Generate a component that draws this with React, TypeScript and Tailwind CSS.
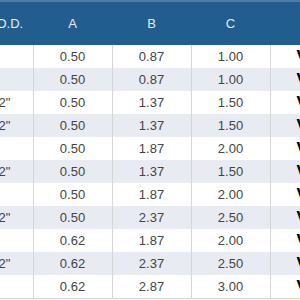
const rows = [
  ['1"', "0.50", "0.87", "1.00"],
  ['1"', "0.50", "0.87", "1.00"],
  ['1-1/2"', "0.50", "1.37", "1.50"],
  ['1-1/2"', "0.50", "1.37", "1.50"],
  ['2"', "0.50", "1.87", "2.00"],
  ['1-1/2"', "0.50", "1.37", "1.50"],
  ['2"', "0.50", "1.87", "2.00"],
  ['2-1/2"', "0.50", "2.37", "2.50"],
  ['2"', "0.62", "1.87", "2.00"],
  ['2-1/2"', "0.62", "2.37", "2.50"],
  ['3"', "0.62", "2.87", "3.00"],
];

export default function App() {
  return (
    <div className="h-[300px] w-[300px] overflow-hidden bg-white font-['Liberation_Sans',Arial,sans-serif]">
      <table className="-ml-[46px] w-[395px] min-w-[395px] table-fixed border-collapse whitespace-nowrap text-[13px] text-[#444]">
        <thead>
          <tr className="h-[44px] border-t-2 border-[#4f7ca5] bg-[#215d8e] text-[#e6edf4]">
            <th className="w-[79px] text-center font-normal">Tube O.D.</th>
            <th className="w-[79px] text-center font-normal">A</th>
            <th className="w-[79px] text-center font-normal">B</th>
            <th className="w-[79px] text-center font-normal">C</th>
            <th className="w-[79px] text-left font-normal"></th>
          </tr>
        </thead>
        <tbody className="border-b border-[#d4d4d4]">
          {rows.map((r, i) => (
            <tr key={i} className={i % 2 === 1 ? "h-[23px] bg-[#e8ebf2]" : "h-[23px] bg-white"}>
              <td className="border-r border-[#d6d6d6] text-center">{r[0]}</td>
              <td className="border-r border-[#d6d6d6] text-center">{r[1]}</td>
              <td className="border-r border-[#d6d6d6] text-center">{r[2]}</td>
              <td className="border-r border-[#d6d6d6] text-center">{r[3]}</td>
              <td className="pl-[26px] text-left text-[17px] leading-none font-bold text-black">View</td>
            </tr>
          ))}
        </tbody>
      </table>
    </div>
  );
}
